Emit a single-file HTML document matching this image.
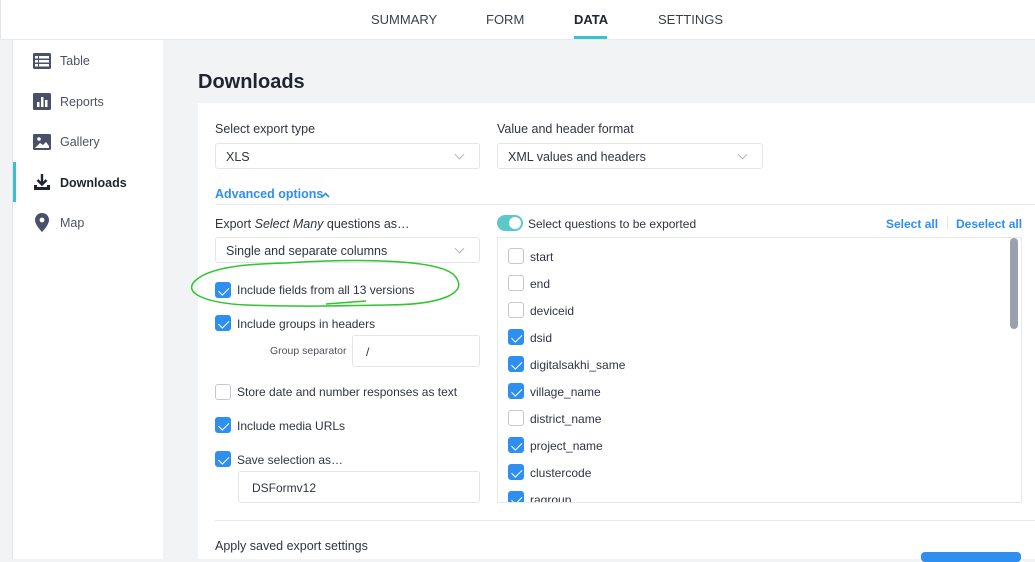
<!DOCTYPE html>
<html><head><style>
*{box-sizing:border-box;margin:0;padding:0}
body{width:1035px;height:559px;overflow:hidden;background:#f2f3f5;font-family:"Liberation Sans",sans-serif;color:#333;position:relative;font-size:12px}
.abs{position:absolute}
.top{left:0;top:0;width:1035px;height:40px;background:#fff;border-bottom:1px solid #e6e8ec}
.tab{top:12px;font-size:13px;color:#3a3f4b}
.side{left:12px;top:40px;width:151px;height:519px;background:#fff;border-left:1px solid #e3e5e8}
.nav{left:20px;font-size:12.5px;color:#4d5260}
.card{left:198px;top:103px;width:837px;height:456px;background:#fff}
.lbl{font-size:12.5px;color:#2f3440}
.sel{height:26px;border:1px solid #e3e5e8;border-radius:3px;background:#fff;font-size:12.5px;color:#2f3440;padding:6px 10px}
.sel:after{content:"";position:absolute;right:16px;top:7px;width:6px;height:6px;border-right:1.2px solid #b5b8c0;border-bottom:1.2px solid #b5b8c0;transform:rotate(45deg)}
.cb{width:16px;height:16px;border-radius:3px;border:1px solid #c5c8d0;background:#fff}
.cb.on{background:#2e8ff0;border-color:#2e8ff0}
.cb.on:after{content:"";position:absolute;left:5px;top:1.5px;width:4.5px;height:8.5px;border-right:1.8px solid #fff;border-bottom:1.8px solid #fff;transform:rotate(45deg)}
.t{font-size:12px;color:#2f3440}
.inp{border:1px solid #e3e5e8;border-radius:3px;background:#fff}
</style></head><body>
<div class="abs top"></div>
<div class="abs" style="left:0;top:0;width:1px;height:40px;background:#e3e5e8"></div>
<div class="abs tab" style="left:371px">SUMMARY</div>
<div class="abs tab" style="left:486px">FORM</div>
<div class="abs tab" style="left:574px;font-weight:bold;color:#1f2430">DATA</div>
<div class="abs" style="left:574px;top:36px;width:33px;height:3px;background:#3bc1c9"></div>
<div class="abs tab" style="left:658px">SETTINGS</div>

<div class="abs side"></div>
<div class="abs" style="left:13px;top:162px;width:3px;height:40px;background:#3bc1c9"></div>
<svg class="abs" style="left:33px;top:53px" width="18" height="16"><rect width="18" height="16" rx="1.5" fill="#4a5068"/><g fill="#fff"><rect x="2" y="3" width="3" height="2.5"/><rect x="6" y="3" width="10" height="2.5"/><rect x="2" y="7" width="3" height="2.5"/><rect x="6" y="7" width="10" height="2.5"/><rect x="2" y="11" width="3" height="2.5"/><rect x="6" y="11" width="10" height="2.5"/></g></svg>
<div class="abs nav" style="left:60px;top:54px">Table</div>
<svg class="abs" style="left:33px;top:93px" width="18" height="17"><rect width="18" height="17" rx="1.5" fill="#4a5068"/><g fill="#fff"><rect x="4" y="9" width="2.5" height="5"/><rect x="8" y="4" width="2.5" height="10"/><rect x="12" y="7" width="2.5" height="7"/></g></svg>
<div class="abs nav" style="left:60px;top:95px">Reports</div>
<svg class="abs" style="left:33px;top:134px" width="18" height="16"><rect width="18" height="16" rx="1.5" fill="#4a5068"/><circle cx="6" cy="5" r="1.8" fill="#fff"/><path d="M2 14 L7 9 L10 11 L13 8 L16 12 L16 14Z" fill="#fff"/></svg>
<div class="abs nav" style="left:60px;top:135px">Gallery</div>
<svg class="abs" style="left:33px;top:173px" width="18" height="19"><path d="M9 1v10M4.5 7l4.5 4.5L13.5 7" stroke="#1f2430" stroke-width="2.4" fill="none"/><path d="M1 12v5h16v-5h-3v2H4v-2z" fill="#1f2430"/></svg>
<div class="abs nav" style="left:60px;top:176px;font-weight:bold;color:#1f2430">Downloads</div>
<svg class="abs" style="left:35px;top:213px" width="14" height="19"><path d="M7 0C3 0 0 3 0 7c0 5 7 12 7 12s7-7 7-12c0-4-3-7-7-7z" fill="#4a5068"/><circle cx="7" cy="7" r="2.4" fill="#fff"/></svg>
<div class="abs nav" style="left:60px;top:216px">Map</div>

<div class="abs" style="left:198px;top:71px;font-size:20px;font-weight:bold;color:#1f2430">Downloads</div>
<div class="abs card"></div>

<div class="abs lbl" style="left:215px;top:122px">Select export type</div>
<div class="abs sel" style="left:215px;top:143px;width:265px">XLS</div>
<div class="abs lbl" style="left:497px;top:122px">Value and header format</div>
<div class="abs sel" style="left:497px;top:143px;width:266px">XML values and headers</div>
<div class="abs" style="left:215px;top:187px;font-size:12.5px;color:#2e8ff0;font-weight:bold">Advanced options</div>
<svg class="abs" style="left:321px;top:192px" width="9" height="6"><path d="M1 5l3.5-3.5L8 5" stroke="#2e8ff0" stroke-width="1.6" fill="none"/></svg>
<div class="abs" style="left:215px;top:204px;width:820px;height:1px;background:#e6e8ec"></div>

<div class="abs lbl" style="left:215px;top:217px">Export <i>Select Many</i> questions as…</div>
<div class="abs sel" style="left:215px;top:237px;width:265px">Single and separate columns</div>

<div class="abs cb on" style="left:215px;top:282px"></div><div class="abs t" style="left:237px;top:283px">Include fields from all 13 versions</div>
<div class="abs cb on" style="left:215px;top:315px"></div><div class="abs t" style="left:237px;top:317px">Include groups in headers</div>
<div class="abs" style="left:270px;top:345px;font-size:10.5px;color:#4d5260">Group separator</div>
<div class="abs inp" style="left:352px;top:335px;width:128px;height:32px"></div>
<div class="abs t" style="left:366px;top:345px">/</div>
<div class="abs cb" style="left:215px;top:384px"></div><div class="abs t" style="left:237px;top:385px">Store date and number responses as text</div>
<div class="abs cb on" style="left:215px;top:417px"></div><div class="abs t" style="left:237px;top:419px">Include media URLs</div>
<div class="abs cb on" style="left:215px;top:451px"></div><div class="abs t" style="left:237px;top:453px">Save selection as…</div>
<div class="abs inp" style="left:238px;top:471px;width:242px;height:32px"></div>
<div class="abs t" style="left:252px;top:481px">DSFormv12</div>
<div class="abs" style="left:215px;top:520px;width:820px;height:1px;background:#e6e8ec"></div>
<div class="abs t" style="left:215px;top:539px;font-size:12.5px">Apply saved export settings</div>
<div class="abs" style="left:921px;top:552px;width:100px;height:10px;background:#2e8ff0;border-radius:4px"></div>

<svg class="abs" style="left:186px;top:255px" width="280" height="58"><path d="M100 8 C160 4 250 3 268 20 C285 38 255 50 200 50 C150 51 110 52 60 50 C20 48 -5 38 10 25 C25 12 60 9 100 8 Z M140 49 L180 46" stroke="#2ec52e" stroke-width="1.5" fill="none"/></svg>

<div class="abs" style="left:497px;top:215px;width:26px;height:16px;border-radius:8px;background:#5cc8c8"></div>
<div class="abs" style="left:509px;top:217px;width:12px;height:12px;border-radius:6px;background:#fff"></div>
<div class="abs t" style="left:528px;top:217px">Select questions to be exported</div>
<div class="abs" style="left:886px;top:217px;font-size:12px;font-weight:bold;color:#2e8ff0">Select all</div>
<div class="abs" style="left:947px;top:216px;width:1px;height:14px;background:#e3e5e8"></div>
<div class="abs" style="left:956px;top:217px;font-size:12px;font-weight:bold;color:#2e8ff0">Deselect all</div>
<div class="abs" style="left:497px;top:237px;width:525px;height:266px;border:1px solid #e6e8ec;overflow:hidden;background:#fff">
<div class="abs" style="left:512px;top:0px;width:8px;height:91px;border-radius:4px;background:#9aa0ad"></div>
</div>
<div class="abs" style="left:498px;top:238px;width:510px;height:264px;overflow:hidden">
<div class="abs cb" style="left:10px;top:10px"></div><div class="abs t" style="left:32px;top:12px">start</div>
<div class="abs cb" style="left:10px;top:37px"></div><div class="abs t" style="left:32px;top:39px">end</div>
<div class="abs cb" style="left:10px;top:64px"></div><div class="abs t" style="left:32px;top:66px">deviceid</div>
<div class="abs cb on" style="left:10px;top:91px"></div><div class="abs t" style="left:32px;top:93px">dsid</div>
<div class="abs cb on" style="left:10px;top:118px"></div><div class="abs t" style="left:32px;top:120px">digitalsakhi_same</div>
<div class="abs cb on" style="left:10px;top:145px"></div><div class="abs t" style="left:32px;top:147px">village_name</div>
<div class="abs cb" style="left:10px;top:172px"></div><div class="abs t" style="left:32px;top:174px">district_name</div>
<div class="abs cb on" style="left:10px;top:199px"></div><div class="abs t" style="left:32px;top:201px">project_name</div>
<div class="abs cb on" style="left:10px;top:226px"></div><div class="abs t" style="left:32px;top:228px">clustercode</div>
<div class="abs cb on" style="left:10px;top:253px"></div><div class="abs t" style="left:32px;top:255px">ragroup</div>
</div>
</body></html>
